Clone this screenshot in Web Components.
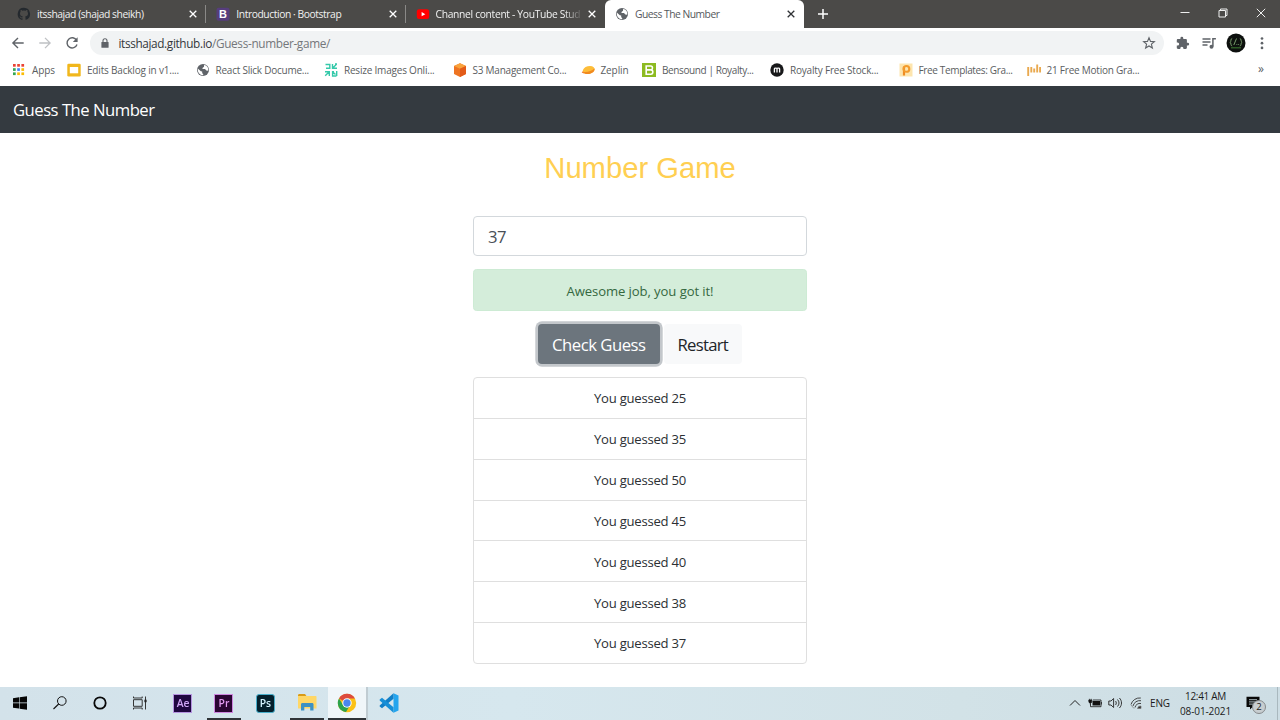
<!DOCTYPE html>
<html lang="en">
<head>
<meta charset="utf-8">
<title>Guess The Number</title>
<style>
  html, body {
    margin: 0;
    height: 100%;
    overflow: hidden;
    background: #fff;
    font-family: "Open Sans", "Noto Sans", sans-serif;
  }
  body {
    display: flex;
    flex-direction: column;
    width: 1280px;
    height: 720px;
  }
  number-game { flex: 1; }
</style>
</head>
<body>
<tab-strip></tab-strip>
<tool-bar></tool-bar>
<bookmarks-bar></bookmarks-bar>
<nav-bar></nav-bar>
<number-game></number-game>
<task-bar></task-bar>

<script>
const globe = `<circle cx="7" cy="7" r="6" fill="#5f6368"/><path d="M1.8 5.6l3 2.6 1.4.2v1.8l1 .8v1.3C4 12.500 1.300 9.500 1.800 5.600zM8 2v1.700L6.500 5v1H9l1.300 1.600 1.900.2C12.800 5 11 2.200 8 2z" fill="#fff"/>`;

const icons = {
  github: [14, `<path fill="#24292e" fill-rule="evenodd" d="M7 .8a6.200 6.200 0 0 0-2 12.100c.3 0 .5-.1.5-.4v-1.200c-1.800.4-2.200-.8-2.200-.8-.3-.7-.7-.9-.7-.9-.6-.4 0-.4 0-.4.600 0 1 .600 1 .600.600 1 1.500.700 1.900.500.1-.4.200-.7.400-.8-1.400-.2-2.900-.7-2.900-3.100 0-.7.200-1.200.600-1.700 0-.2-.200-.8.100-1.600 0 0 .500-.2 1.700.600a6 6 0 0 1 3.200 0c1.200-.8 1.700-.600 1.700-.600.300.8.100 1.400.1 1.600.400.500.600 1 .600 1.700 0 2.400-1.500 2.900-2.900 3.100.200.200.400.600.400 1.100v1.800c0 .200.200.5.500.4A6.200 6.200 0 0 0 7 .8z"/>`],
  bootstrap: [14, `<rect x=".5" y=".8" width="13" height="13" rx="2" fill="#563d7c"/><text x="7" y="11.200" text-anchor="middle" font-family="Liberation Sans" font-size="11" font-weight="700" fill="#fff">B</text>`],
  youtube: [14, `<rect x=".8" y="2.300" width="12.400" height="9.700" rx="2.300" fill="#f00"/><path d="M5.600 5v4.300l3.700-2.150z" fill="#fff"/>`],
  globe: [14, globe],
  slides: [14, `<rect x=".3" y=".8" width="13.400" height="12.800" rx="1.300" fill="#f1b71c"/><path d="M2.800 4h8.400v6.300H2.800z" fill="#fff"/>`],
  apps: [14, [1, 5.200, 9.400].map((y, r) => [1, 5.200, 9.400].map((x, c) => `<rect x="${x}" y="${y}" width="2.700" height="2.700" fill="${[['#ea4335', '#ea4335', '#ea4335'], ['#34a853', '#4285f4', '#fbbc04'], ['#34a853', '#fbbc04', '#fbbc04']][r][c]}"/>`).join('')).join('')],
  resize: [14, `<g fill="none" stroke="#35c9aa" stroke-width="1.400"><path d="M1.500 1.500h4.300v3.800H2M8.500 1v4.300h4.500M12.500 1.300L9 4.800M13 .9h-2M5.300 13V8.700H1M1.200 12.800L5 9M12.500 13H8.600V8.700H10M9 9.100l2.500 2.400M12.700 8v5"/></g>`],
  s3: [14, `<path d="M7 .3L13 3v8l-6 3-6-3V3z" fill="#ee7422"/><path d="M7 .3L13 3 7 5.800 1 3z" fill="#f9a33c"/><path d="M7 5.800L13 3v8l-6 3z" fill="#e35b18"/>`],
  zeplin: [14, `<path d="M.7 9.500L3 7l2.500 2L3 10.500z" fill="#f26b21"/><ellipse cx="7.700" cy="7" rx="6" ry="3.900" transform="rotate(-15 7.700 7)" fill="#fdbd39"/><path d="M2 8.800c4 .8 8-.5 11.600-3.300.3 3-2.500 5-5.600 5.500-2.800.4-5.300-.3-6-2.200z" fill="#f18a1f"/>`],
  bensound: [14, `<path d="M0 0h14v14H0z" fill="#8dbb21"/><path d="M4.200 3h4.600c2.200 0 2.200 3.700 0 3.900 2.700 0 2.700 4.300 0 4.300H4.200zM4.200 6.900h4.500" fill="none" stroke="#fff" stroke-width="1.600"/>`],
  motion: [14, `<circle cx="7" cy="7" r="6.700" fill="#17181a"/><path d="M4.400 9.500V5.800c0-1 2.600-1 2.600 0v3.700M7 5.800c0-1 2.600-1 2.600 0v3.700" fill="none" stroke="#fff" stroke-width="1.300"/>`],
  templates: [14, `<path d="M.5.500h13v13H.500z" fill="#fde5ae"/><path d="M5 12.500V3.500" stroke="#ef8b22" stroke-width="2.200"/><circle cx="7.400" cy="5.900" r="2.900" fill="none" stroke="#f39b2d" stroke-width="2.100"/>`],
  bars: [14, `<path d="M1.200 4v9M4.300 4v5.500M7.200 5.500v4M10.200 1.500v8M13.100 4v5.500" stroke="#e9a94f" stroke-width="1.900"/>`],
  close: [10, `<path d="M1.700 1.700l6.600 6.600M8.300 1.700L1.700 8.300" fill="none" stroke="currentColor" stroke-width="1.300"/>`],
  plus: [12, `<path d="M6 1v10M1 6h10" stroke="#fff" stroke-width="1.500"/>`],
  minimize: [10, `<path d="M.5 4.500h9" stroke="#eee" stroke-width="1"/>`],
  restore: [10, `<path d="M1 2.500h6.500v6.500H1zM2.500 2.500V1h6.500v6.500H7.500" fill="none" stroke="#eee"/>`],
  quit: [10, `<path d="M.8.800l8.400 8.400M9.200.800L.8 9.200" stroke="#eee"/>`],
  back: [14, `<path d="M12.700 7H2M7 1.900L1.900 7 7 12.100" fill="none" stroke="#5f6368" stroke-width="1.400"/>`],
  forward: [14, `<path d="M1.300 7H12M7 1.900L12.100 7 7 12.100" fill="none" stroke="#bfc1c4" stroke-width="1.300"/>`],
  reload: [14, `<path d="M11.600 4.300A5.100 5.100 0 1 0 12 8.500" fill="none" stroke="#5f6368" stroke-width="1.400"/><path d="M12.600 1.300v4.800H7.800z" fill="#5f6368"/>`],
  lock: [10, `<rect x="1.400" y="4" width="7.200" height="5.800" rx=".6" fill="#5f6368"/><path d="M3 4.500V2.800a2 2 0 0 1 4 0v1.700" fill="none" stroke="#5f6368" stroke-width="1.100"/>`],
  star: [14, `<path d="M7 1.800l1.500 3.600 3.900.3-3 2.500 1 3.800L7 10l-3.400 2 1-3.800-3-2.500 3.900-.3z" fill="none" stroke="#5f6368" stroke-width="1.100"/>`],
  puzzle: [14, `<path d="M11.700 6.700h-.8V4.200c0-.7-.5-1.200-1.200-1.200H7.300v-.8a1.450 1.450 0 0 0-2.900 0V3H2C1.300 3 .8 3.500.8 4.200v2.200h.8a1.550 1.550 0 0 1 0 3.100H.8v2.300c0 .7.500 1.200 1.200 1.200h2.300v-.8a1.550 1.550 0 0 1 3.100 0v.8h2.300c.7 0 1.200-.5 1.200-1.200V9.600h.8a1.450 1.450 0 0 0 0-2.900z" fill="#5f6368"/>`],
  queue: [14, `<path d="M.5 3h8M.5 6h8M.5 9h5" stroke="#5f6368" stroke-width="1.300"/><path d="M10.900 10.500V2.800h3" fill="none" stroke="#5f6368" stroke-width="1.500"/><circle cx="9.500" cy="10.700" r="2" fill="#5f6368"/>`],
  avatar: [20, `<circle cx="10" cy="10" r="9.500" fill="#0d100e"/><path d="M6.200 5.500c-2 0-.6 3.300-2.200 3.700 1.600.4.200 3.800 2.200 3.800M13.800 5.500c2 0 .6 3.300 2.200 3.700-1.600.4-.2 3.800-2.200 3.800M10.500 5.500L7.800 12M10.500 11.500h.8M12.300 11.500h.8" fill="none" stroke="#789c6c" stroke-width="1"/><path d="M5 14.800h10" stroke="#356b2d" stroke-width="1.200"/>`],
  dots: [14, `<g fill="#5f6368"><circle cx="7" cy="2.500" r="1.350"/><circle cx="7" cy="7.200" r="1.350"/><circle cx="7" cy="11.900" r="1.350"/></g>`],
  windows: [14, `<path d="M0 2.200l6-.9v5.300H0zM6.600 1.200L14 .2v6.400H6.600zM0 7.300h6v5.300l-6-.8zM6.600 7.300H14v6.400l-7.400-1z" fill="#060606"/>`],
  search: [16, `<circle cx="9.800" cy="6" r="4.300" fill="none" stroke="#111"/><path d="M6.700 9L1.500 14" stroke="#111" stroke-width="1.100"/>`],
  cortana: [14, `<circle cx="7" cy="7" r="5.700" fill="none" stroke="#080808" stroke-width="1.800"/>`],
  tasks: [14, `<path d="M.5 3.700h8.700v6.600H.500zM.500.500v1.500h8.700V.500M.500 13.500V12h8.700v1.500M12.500.500v13" fill="none" stroke="#222" stroke-width=".9"/><path d="M11.400 3.700h2.200v2.500h-2.200z" fill="#222"/>`],
  folder: [20, `<path d="M1 2.500C1 1.500 1.500 1 2.500 1H8l1.800 2.500H1z" fill="#d99b16"/><path d="M1 3h17.500c.6 0 1 .4 1 1v11.500H1z" fill="#ffd766"/><path d="M4 17.500v-6c0-1 .5-1.500 1.500-1.500h9.500c1 0 1.500.5 1.500 1.500v6h-3.300v-3.600H7.300v3.600z" fill="#3c91c4"/>`],
  chrome: [20, `<circle cx="10" cy="10" r="9.200" fill="#fbc116"/><path d="M10 10L2 5.400A9.200 9.200 0 0 1 18 5.600H10z" fill="#dd4b3e"/><path d="M2 5.400a9.200 9.200 0 0 0 7 13.700l4-6.900L6.200 12.200z" fill="#2ca24c"/><circle cx="10" cy="10" r="4.700" fill="#fff"/><circle cx="10" cy="10" r="3.700" fill="#4a86ed"/>`],
  vscode: [20, `<path d="M14.500.300L19.500 2.600v14.800l-5 2.300z" fill="#24a5ee"/><path d="M14.500.300v5.400L3 15.200.700 13.500v-1L14.500.300z" fill="#117fc7"/><path d="M14.500 19.700v-5.400L3 4.800.700 6.500v1l13.800 12.200z" fill="#178fd7"/>`],
  chevron: [12, `<path d="M1 8.500L6 3.500l5 5" fill="none" stroke="#222"/>`],
  battery: [14, `<path d="M4.500 5h7.700v4.500H4.500z" fill="#111"/><path d="M2.500 7.500v3.200h10.500V4H4.800M13.600 6v2.500" fill="none" stroke="#111" stroke-width=".8"/><path d="M.8 4h3v1.500a1.500 1.500 0 0 1-3 0zM1.400 4V2.800M3.200 4V2.800M2.300 6.500v2" fill="#111" stroke="#111" stroke-width=".7"/>`],
  volume: [14, `<path d="M.8 5v4h2.200l2.600 2.500v-9L3 5zM7.500 5c1 1 1 3 0 4M9.500 3.500c2 2 2 5 0 7M11.400 2c2.800 2.800 2.800 7.200 0 10" fill="none" stroke="#222" stroke-width=".9"/>`],
  wifi: [12, `<path d="M1 7.500A9 9 0 0 1 10.800 1M3 9A7 7 0 0 1 11 3.700M5 10.500A5 5 0 0 1 11 6.500" fill="none" stroke="#333" stroke-width=".9"/><path d="M7.500 11.500A3 3 0 0 1 11 9v2.500zM1 8l3 3.500" fill="#333" stroke="#777" stroke-width=".7"/>`],
  notes: [14, `<path d="M.5.800h13v10.200H6.500L4 13.500V11H.5z" fill="#080808"/><path d="M3 3.700h8M3 5.900h8M3 8.100h8" stroke="#b9c8ce" stroke-width=".9"/>`]
};

// Attaches an open shadow root filled with the given markup
class Base extends HTMLElement {
  render(html) {
    if (!this.shadowRoot) this.attachShadow({ mode: 'open' });
    this.shadowRoot.innerHTML = html;
  }
}

customElements.define('ui-icon', class extends Base {
  connectedCallback() {
    const [box, shape] = icons[this.getAttribute('name')];
    const size = this.getAttribute('size') || box;
    this.render(`
      <style>
        :host { display: block; flex: none; width: ${size}px; height: ${size}px; }
        svg { display: block; }
      </style>
      <svg width="${size}" height="${size}" viewBox="0 0 ${box} ${box}">${shape}</svg>`);
  }
});

// One line of text, tracked so that it takes up w pixels
customElements.define('fit-text', class extends Base {
  connectedCallback() {
    const w = +this.getAttribute('w');
    this.render(`
      <style>
        :host { display: block; flex: none; width: ${w}px; white-space: nowrap; }
        span { display: inline-block; }
      </style>
      <span><slot></slot></span>`);
    const span = this.shadowRoot.querySelector('span');
    const gap = (w - span.getBoundingClientRect().width) / this.textContent.length;
    span.style.letterSpacing = gap.toFixed(3) + 'px';
  }
});

customElements.define('browser-tab', class extends Base {
  connectedCallback() {
    this.render(`
      <style>
        :host {
          display: flex; align-items: center; box-sizing: border-box;
          width: 199.300px; height: 28px; padding: 0 8px 0 10px; gap: 6px;
          color: #f1f1f1; font-size: 10.300px;
        }
        :host([line]) { padding-right: 7px; border-right: 1px solid transparent; border-image: linear-gradient(transparent 6px, #8a8987 6px, #8a8987 22px, transparent 22px) 1; }
        :host([active]) { color: #55585c; background: #fff; border-radius: 6px 6px 0 0; }
        .label { flex: 1; overflow: hidden; }
        :host([fade]) .label { -webkit-mask: linear-gradient(to right, #000 128px, transparent 147px); }
        .close { color: #fff; }
        :host([active]) .close { color: #303236; }
      </style>
      <ui-icon name="${this.getAttribute('icon')}"></ui-icon>
      <div class="label"><slot></slot></div>
      <ui-icon class="close" name="close"></ui-icon>`);
  }
});

customElements.define('tab-strip', class extends Base {
  connectedCallback() {
    this.render(`
      <style>
        :host { display: flex; align-items: center; height: 28px; flex: none; background: #4b4a48; padding-left: 7px; }
        .plus { margin-left: 12.500px; }
        .window { display: flex; gap: 28px; margin: -3px 14px 0 auto; }
      </style>
      <browser-tab icon="github" line><fit-text w="106.500">itsshajad (shajad sheikh)</fit-text></browser-tab>
      <browser-tab icon="bootstrap" line><fit-text w="105">Introduction · Bootstrap</fit-text></browser-tab>
      <browser-tab icon="youtube" fade><fit-text w="147">Channel content - YouTube Studi</fit-text></browser-tab>
      <browser-tab icon="globe" active><fit-text w="84.500">Guess The Number</fit-text></browser-tab>
      <ui-icon class="plus" name="plus"></ui-icon>
      <div class="window">
        <ui-icon name="minimize"></ui-icon>
        <ui-icon name="restore"></ui-icon>
        <ui-icon name="quit"></ui-icon>
      </div>`);
  }
});

customElements.define('tool-bar', class extends Base {
  connectedCallback() {
    this.render(`
      <style>
        :host { display: flex; align-items: center; box-sizing: border-box; height: 30px; flex: none; padding: 0 11px; background: #fff; }
        .nav { display: flex; gap: 12.800px; width: 79px; }
        .url {
          display: flex; align-items: center; box-sizing: border-box;
          width: 1074px; height: 24px; padding: 0 8px 0 10px;
          border-radius: 12px; background: #f1f3f4;
          font-size: 11.800px; color: #34373b;
        }
        .lock { margin-right: 8.500px; }
        .path { color: #74777b; }
        .star { margin-left: auto; }
        .actions { display: flex; align-items: center; gap: 11px; margin-left: 12px; }
        .queue { margin-left: 1.500px; }
        .menu { margin-left: -2px; }
      </style>
      <div class="nav">
        <ui-icon name="back"></ui-icon>
        <ui-icon name="forward"></ui-icon>
        <ui-icon name="reload"></ui-icon>
      </div>
      <div class="url">
        <ui-icon class="lock" name="lock"></ui-icon>
        <fit-text w="93.500">itsshajad.github.io</fit-text>
        <fit-text class="path" w="118">/Guess-number-game/</fit-text>
        <ui-icon class="star" name="star"></ui-icon>
      </div>
      <div class="actions">
        <ui-icon name="puzzle"></ui-icon>
        <ui-icon class="queue" name="queue"></ui-icon>
        <ui-icon name="avatar" style="margin-left: -1px"></ui-icon>
        <ui-icon class="menu" name="dots"></ui-icon>
      </div>`);
  }
});

customElements.define('bookmark-item', class extends Base {
  connectedCallback() {
    this.render(`
      <style>
        :host { display: flex; align-items: center; flex: none; gap: 6px; width: ${this.getAttribute('span')}px; }
      </style>
      <ui-icon name="${this.getAttribute('icon')}"></ui-icon>
      <slot></slot>`);
  }
});

const bookmarks = [
  ['apps', 55, 23, 'Apps'],
  ['slides', 128.500, 92, 'Edits Backlog in v1....'],
  ['globe', 128.500, 93.500, 'React Slick Docume...'],
  ['resize', 128.500, 90.500, 'Resize Images Onli...'],
  ['s3', 128, 94, 'S3 Management Co...'],
  ['zeplin', 61.500, 28, 'Zeplin'],
  ['bensound', 128, 91.500, 'Bensound | Royalty...'],
  ['motion', 128.500, 88.500, 'Royalty Free Stock...'],
  ['templates', 128, 94, 'Free Templates: Gra...'],
  ['bars', 120, 93, '21 Free Motion Gra...']
];

customElements.define('bookmarks-bar', class extends Base {
  connectedCallback() {
    this.render(`
      <style>
        :host {
          display: flex; align-items: center; box-sizing: border-box; flex: none;
          height: 28px; padding: 0 16px 4px 12px; background: #fff;
          font-size: 10px; color: #5a5d61;
        }
        .more { margin: -3px 0 0 auto; font-size: 12px; }
      </style>
      ${bookmarks.map(([icon, span, w, label]) =>
        `<bookmark-item icon="${icon}" span="${span}"><fit-text w="${w}">${label}</fit-text></bookmark-item>`).join('')}
      <span class="more">»</span>`);
  }
});

customElements.define('nav-bar', class extends Base {
  connectedCallback() {
    this.render(`
      <style>
        :host {
          display: flex; align-items: center; box-sizing: border-box; flex: none;
          height: 46.500px; padding: 1px 13px 0; background: #343a40;
          font-size: 16.700px; color: #fff;
        }
      </style>
      <fit-text w="141.500">Guess The Number</fit-text>`);
  }
});

customElements.define('game-button', class extends Base {
  connectedCallback() {
    this.render(`
      <style>
        button {
          display: block; height: 40px; padding: 1px 14px 0; border: 0; border-radius: 4px;
          background: #f8f9fa; color: #212529; font: inherit; font-size: 16.700px;
        }
        :host([focused]) button { background: #6c757d; color: #fff; box-shadow: 0 0 0 2.700px #c3c7cb; }
      </style>
      <button><slot></slot></button>`);
  }
});

customElements.define('guess-list', class extends Base {
  connectedCallback() {
    const rows = this.getAttribute('values').split(',');
    this.render(`
      <style>
        :host { display: block; }
        ul { margin: 0; padding: 0; list-style: none; border: 1px solid #dfdfdf; border-radius: 4px; }
        li { display: flex; align-items: center; justify-content: center; box-sizing: border-box; height: 40.870px; padding-top: .6px; border-bottom: 1px solid #dfdfdf; }
        li:last-child { height: 39.800px; border: 0; }
      </style>
      <ul>${rows.map(n => `<li><fit-text w="92">You guessed ${n}</fit-text></li>`).join('')}</ul>`);
  }
});

customElements.define('number-game', class extends Base {
  connectedCallback() {
    this.render(`
      <style>
        :host { display: flex; flex-direction: column; align-items: center; min-height: 0; background: #fff; color: #2c3034; font-size: 13.100px; }
        h1 { margin: 18.500px 0 31px; font: 400 29.200px/34px "Liberation Sans", Arial, sans-serif; color: #ffcf52; }
        .game { display: flex; flex-direction: column; width: 334px; }
        .guess {
          display: flex; align-items: center; box-sizing: border-box; height: 40px; padding: 1px 14px 0;
          border: 1px solid #d3d8dc; border-radius: 4px; font-size: 16.700px; color: #495057;
        }
        .alert {
          display: flex; align-items: center; justify-content: center; box-sizing: border-box;
          height: 42px; margin: 13px 0; padding-top: 1px; border: 1px solid #cdebd4; border-radius: 3.500px;
          background: #d4edda; color: #35683f;
        }
        .buttons { display: flex; justify-content: center; gap: 4px; margin-bottom: 13px; }
      </style>
      <h1>Number Game</h1>
      <div class="game">
        <div class="guess"><fit-text w="18">37</fit-text></div>
        <div class="alert"><fit-text w="147">Awesome job, you got it!</fit-text></div>
        <div class="buttons">
          <game-button focused><fit-text w="93.500">Check Guess</fit-text></game-button>
          <game-button><fit-text w="50.500">Restart</fit-text></game-button>
        </div>
        <guess-list values="25,35,50,45,40,38,37"></guess-list>
      </div>`);
  }
});

// A square Adobe launcher: two letters in a bright frame
customElements.define('adobe-icon', class extends Base {
  connectedCallback() {
    this.render(`
      <style>
        :host {
          display: flex; align-items: center; justify-content: center; box-sizing: border-box;
          width: 19px; height: 19px; border: 1.500px solid var(--edge); background: var(--fill);
          color: var(--ink); font: 600 11.500px/1 "Open Sans", sans-serif;
        }
        span { display: block; margin-top: -1px; transform: scaleX(.9); }
      </style>
      <span><slot></slot></span>`);
  }
});

customElements.define('task-bar', class extends Base {
  connectedCallback() {
    this.render(`
      <style>
        :host {
          display: flex; flex: none; box-sizing: border-box; height: 33.500px;
          background: linear-gradient(90deg, #d3e2ea, #d6e7ee 40%, #d2e2e7 75%, #cddde4);
          color: #1b1b1b; font-size: 10px;
        }
        .apps { display: flex; }
        .app { display: flex; align-items: center; justify-content: center; box-sizing: border-box; width: 41.300px; height: 33.500px; }
        .sys { width: 40px; }
        .sys + .app:not(.sys) { margin-left: 2px; }
        .open { background: linear-gradient(#2f3438, #2f3438) center bottom / 34px 2px no-repeat; }
        .current { background: linear-gradient(#2f3438, #2f3438) center bottom / 100% 2px no-repeat, #f0f6f9; width: 38px; margin: 0 2px 0 1.300px; box-shadow: 2px 0 0 #c0ccd2; }
        .ae { --edge: #b593e0; --fill: #1f0740; --ink: #cfa5f5; }
        .pr { --edge: #cd86df; --fill: #2b0533; --ink: #e59bf3; }
        .ps { --edge: #48aecb; --fill: #04202c; --ink: #d5f3ff; border-radius: 3px; }
        .tray { display: flex; align-items: center; margin-left: auto; }
        .lang { margin: 0 10px 0 8px; }
        .clock { display: flex; flex-direction: column; align-items: center; gap: 1px; line-height: 14px; }
        .action { position: relative; margin-left: 15px; width: 31px; }
        .badge {
          position: absolute; left: 6px; top: 4px; width: 14px; height: 14px; box-sizing: border-box;
          border: 1px solid #85898b; border-radius: 50%; background: #c7cdd0;
          font-size: 9.500px; line-height: 12px; text-align: center;
        }
        .edge { align-self: stretch; width: 3px; box-sizing: border-box; border-left: 1px solid #a9b8be; }
      </style>
      <div class="apps">
        <div class="app sys"><ui-icon name="windows"></ui-icon></div>
        <div class="app sys"><ui-icon name="search"></ui-icon></div>
        <div class="app sys"><ui-icon name="cortana"></ui-icon></div>
        <div class="app sys"><ui-icon name="tasks"></ui-icon></div>
        <div class="app"><adobe-icon class="ae">Ae</adobe-icon></div>
        <div class="app open"><adobe-icon class="pr">Pr</adobe-icon></div>
        <div class="app"><adobe-icon class="ps">Ps</adobe-icon></div>
        <div class="app open"><ui-icon name="folder"></ui-icon></div>
        <div class="app current"><ui-icon name="chrome"></ui-icon></div>
        <div class="app"><ui-icon name="vscode"></ui-icon></div>
      </div>
      <div class="tray">
        <ui-icon name="chevron" style="margin-right: 7px"></ui-icon>
        <ui-icon name="battery" style="margin-right: 6px"></ui-icon>
        <ui-icon name="volume" style="margin-right: 8px"></ui-icon>
        <ui-icon name="wifi"></ui-icon>
        <fit-text class="lang" w="20">ENG</fit-text>
        <div class="clock">
          <fit-text w="41">12:41 AM</fit-text>
          <fit-text w="51">08-01-2021</fit-text>
        </div>
        <div class="action">
          <ui-icon name="notes"></ui-icon>
          <div class="badge">2</div>
        </div>
        <div class="edge"></div>
      </div>`);
  }
});
</script>
</body>
</html>
